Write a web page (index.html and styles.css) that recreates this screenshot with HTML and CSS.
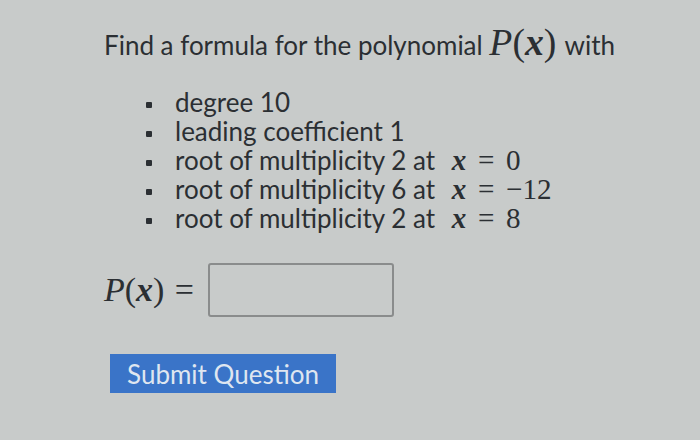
FILE: index.html
```html
<!DOCTYPE html>
<html lang="en">
<head>
    <meta charset="UTF-8">
    <title>Polynomial question</title>
    <link rel="stylesheet" href="styles.css">
</head>
<body>
    <div class="question">
        <p class="prompt">Find a formula for the polynomial <span class="math big"><i>P</i>(<i class="var">x</i>)</span> with</p>
        <ul class="conditions">
            <li>degree 10</li>
            <li>leading coefficient 1</li>
            <li>root of multiplicity 2 at <span class="math"><i class="var">x</i><span class="rel">=</span>0</span></li>
            <li>root of multiplicity 6 at <span class="math"><i class="var">x</i><span class="rel">=</span>&minus;12</span></li>
            <li>root of multiplicity 2 at <span class="math"><i class="var">x</i><span class="rel">=</span>8</span></li>
        </ul>
        <div class="answer">
            <span class="math label"><i>P</i>(<i class="var">x</i>)<span class="rel">=</span></span>
            <input class="answer-box" type="text">
        </div>
        <button class="submit">Submit Question</button>
    </div>
</body>
</html>
```

FILE: styles.css
```css
body {
    margin: 0;
    background-color: #c8cbca;
    color: #2b2f33;
    font-family: Lato, "Open Sans", sans-serif;
}
.question {
    padding: 28px 0 0 104px;
}
.prompt {
    margin: 0;
    font-size: 26px;
    line-height: 34px;
}
.math {
    font-family: "Liberation Serif", "DejaVu Serif", serif;
    font-size: 1.12em;
    line-height: 0;
}
.math.big {
    font-size: 1.45em;
    margin-right: 2px;
}
.math .var {
    font-weight: bold;
}
.rel {
    margin: 0 0.3em;
}
.conditions {
    list-style: none;
    margin: 26px 0 0 0;
    padding-left: 42px;
    font-size: 26px;
    line-height: 29px;
}
.conditions li::before {
    content: "";
    display: inline-block;
    width: 6px;
    height: 6px;
    border-radius: 1px;
    background-color: #2b2f33;
    vertical-align: middle;
    margin-right: 23px;
}
.conditions .math {
    margin-left: 10px;
}
.conditions .rel {
    margin: 0 0.4em;
}
.answer {
    display: flex;
    align-items: center;
    gap: 4px;
    margin-top: 30px;
}
.label {
    font-size: 34px;
    line-height: 40px;
}
.answer-box {
    width: 186px;
    height: 54px;
    box-sizing: border-box;
    border: 2px solid #8a8c8c;
    border-radius: 3px;
    background: transparent;
}
.submit {
    margin: 37px 0 0 6px;
    padding: 0;
    height: 39px;
    width: 226px;
    border: none;
    background-color: #3a74c8;
    color: #dfe6f0;
    font-family: Lato, "Open Sans", sans-serif;
    font-size: 26px;
}
```
